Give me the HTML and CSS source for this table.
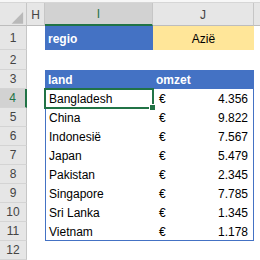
FILE: index.html
```html
<!DOCTYPE html>
<html>
<head>
<meta charset="utf-8">
<link rel="stylesheet" href="styles.css">
</head>
<body>
<div class="sheet">
  <div class="strip"></div>

  <div class="corner"><svg width="27" height="23" viewBox="0 0 27 23"><polygon points="24,9 24,21 12,21" fill="#b9b9b9"/></svg></div>
  <div class="colhead">H</div>
  <div class="colhead sel">I</div>
  <div class="colhead">J</div>
  <div class="colhead last"></div>

  <div class="rowhead">1</div><div class="cell"></div><div class="cell blue bold">regio</div><div class="cell yellow center">Azië</div><div class="cell"></div>
  <div class="rowhead">2</div><div class="cell"></div><div class="cell"></div><div class="cell"></div><div class="cell"></div>
  <div class="rowhead">3</div><div class="cell"></div><div class="cell blue bold">land</div><div class="cell blue bold">omzet</div><div class="cell"></div>

  <div class="rowhead selrow">4</div><div class="cell"></div><div class="cell tl">Bangladesh</div><div class="cell tr"><span>€</span><span>4.356</span></div><div class="cell"></div>
  <div class="rowhead">5</div><div class="cell"></div><div class="cell tl">China</div><div class="cell tr"><span>€</span><span>9.822</span></div><div class="cell"></div>
  <div class="rowhead">6</div><div class="cell"></div><div class="cell tl">Indonesië</div><div class="cell tr"><span>€</span><span>7.567</span></div><div class="cell"></div>
  <div class="rowhead">7</div><div class="cell"></div><div class="cell tl">Japan</div><div class="cell tr"><span>€</span><span>5.479</span></div><div class="cell"></div>
  <div class="rowhead">8</div><div class="cell"></div><div class="cell tl">Pakistan</div><div class="cell tr"><span>€</span><span>2.345</span></div><div class="cell"></div>
  <div class="rowhead">9</div><div class="cell"></div><div class="cell tl">Singapore</div><div class="cell tr"><span>€</span><span>7.785</span></div><div class="cell"></div>
  <div class="rowhead">10</div><div class="cell"></div><div class="cell tl">Sri Lanka</div><div class="cell tr"><span>€</span><span>1.345</span></div><div class="cell"></div>
  <div class="rowhead">11</div><div class="cell"></div><div class="cell tl bl">Vietnam</div><div class="cell tr bl"><span>€</span><span>1.178</span></div><div class="cell"></div>
  <div class="rowhead">12</div><div class="cell"></div><div class="cell"></div><div class="cell"></div><div class="cell"></div>

  <div class="selection"><div class="handle"></div></div>
</div>
</body>
</html>
```

FILE: styles.css
```css
html, body {
  margin: 0;
  padding: 0;
  background: #ffffff;
}
body {
  width: 260px;
  height: 260px;
  overflow: hidden;
  font-family: "Liberation Sans", Arial, sans-serif;
  font-size: 12px;
  color: #000;
}
.sheet {
  position: relative;
  display: grid;
  grid-template-columns: 27px 18px 108px 101px 6px;
  grid-template-rows: 3px 23px 24px 20px repeat(10, 19px);
}
.strip {
  grid-column: 1 / -1;
  background: #f7f7f7;
  border-bottom: 1px solid #d6d6d6;
  box-sizing: border-box;
}
.corner {
  background: #e6e6e6;
  border-right: 1px solid #c6c6c6;
  border-bottom: 1px solid #bdbdbd;
  box-sizing: border-box;
  display: flex;
}
.colhead {
  background: #e6e6e6;
  border-right: 1px solid #c6c6c6;
  border-bottom: 1px solid #bdbdbd;
  box-sizing: border-box;
  display: flex;
  align-items: center;
  justify-content: center;
  color: #444;
  font-size: 12px;
  padding-top: 1px;
}
.colhead.sel {
  background: #d2d2d2;
  border-bottom: 2px solid #217346;
  color: #217346;
}
.colhead.last {
  border-right: none;
}
.rowhead {
  background: #e6e6e6;
  border-right: 1px solid #c6c6c6;
  border-bottom: 1px solid #d4d4d4;
  box-sizing: border-box;
  display: flex;
  align-items: center;
  justify-content: center;
  color: #444;
  font-size: 12px;
}
.rowhead.selrow {
  background: #d2d2d2;
  border-right: 2px solid #217346;
  color: #217346;
}
.cell {
  box-sizing: border-box;
  display: flex;
  align-items: center;
  padding-top: 1px;
  white-space: nowrap;
}
.blue {
  background: #4472c4;
  color: #ffffff;
  padding-left: 3px;
}
.bold {
  font-weight: bold;
}
.yellow {
  background: #ffe699;
}
.center {
  justify-content: center;
}
.tl {
  border-left: 1px solid #4472c4;
  padding-left: 3px;
}
.tr {
  border-right: 1px solid #4472c4;
  justify-content: space-between;
  padding-left: 6px;
  padding-right: 5px;
}
.bl {
  border-bottom: 1px solid #4472c4;
}
.selection {
  position: absolute;
  left: 44px;
  top: 88px;
  width: 110px;
  height: 21px;
  border: 2px solid #217346;
  box-sizing: border-box;
}
.handle {
  position: absolute;
  right: -4px;
  bottom: -4px;
  width: 5px;
  height: 5px;
  background: #217346;
  border: 1px solid #ffffff;
}
```
